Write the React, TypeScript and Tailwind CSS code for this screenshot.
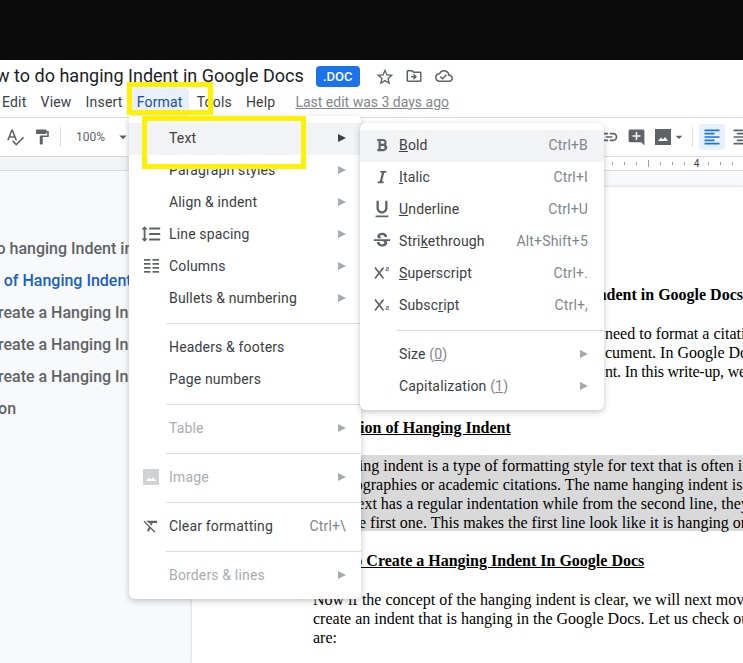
import type { ReactNode } from 'react'
import {
  MdFormatUnderlined,
  MdStrikethroughS,
  MdFormatLineSpacing,
  MdFormatClear,
  MdFormatPaint,
  MdSpellcheck,
  MdStarBorder,
  MdOutlineDriveFileMove,
  MdOutlineCloudDone,
  MdAddComment,
  MdLink,
  MdFormatAlignLeft,
  MdFormatAlignCenter,
  MdArrowDropDown,
} from 'react-icons/md'
import { FaBold, FaItalic } from 'react-icons/fa'

function Arrow({ dark = false }: { dark?: boolean }) {
  return (
    <svg width="8" height="8" viewBox="0 0 8 8" className={dark ? 'text-[#3c4043]' : 'text-[#a6abb0]'}>
      <polygon points="0,0 8,4 0,8" fill="currentColor" />
    </svg>
  )
}

function ColumnsIcon() {
  return (
    <svg width="15" height="14" viewBox="0 0 15 14" fill="#5f6368">
      {[0, 4, 8, 12].map(y => (
        <g key={y}>
          <rect x="0" y={y} width="6.5" height="1.7" />
          <rect x="8.5" y={y} width="6.5" height="1.7" />
        </g>
      ))}
    </svg>
  )
}

function ImageIcon({ fill }: { fill: string }) {
  return (
    <svg width="16" height="16" viewBox="0 0 16 16">
      <rect width="16" height="16" fill={fill} />
      <path d="M3 12 L6 8.5 L8 10.5 L10 8 L13 12 Z" fill="#fff" />
    </svg>
  )
}

function ScriptIcon({ sub = false }: { sub?: boolean }) {
  const y = sub ? 8 : 1
  return (
    <svg width="16" height="14" viewBox="0 0 16 14" fill="none" stroke="#5f6368">
      <path d="M1 1.5 L9.5 12.5 M9.5 1.5 L1 12.5" strokeWidth="1.7" />
      <path
        d={`M12 ${y + 0.5} H14.5 V${y + 2} H12 V${y + 3.6} H15`}
        strokeWidth="0.8"
      />
    </svg>
  )
}

function MainItem({
  label,
  icon,
  arrow,
  hint,
  disabled,
  active,
}: {
  label: string
  icon?: ReactNode
  arrow?: boolean
  hint?: string
  disabled?: boolean
  active?: boolean
}) {
  return (
    <div className={`flex h-8 items-center pb-[2px] pr-[15px] ${active ? 'bg-[#f1f3f4]' : ''}`}>
      <div className="flex w-10 shrink-0 items-center justify-center pl-[4px]">{icon}</div>
      <span className={disabled ? 'text-[#a9adb1]' : 'text-[#3c4043]'}>{label}</span>
      <div className="ml-auto flex items-center">
        {hint && <span className="text-[#80868b]">{hint}</span>}
        {arrow && <Arrow dark={active} />}
      </div>
    </div>
  )
}

function SubItem({
  label,
  icon,
  hint,
  arrow,
  active,
}: {
  label: ReactNode
  icon?: ReactNode
  hint?: string
  arrow?: boolean
  active?: boolean
}) {
  return (
    <div className={`flex h-8 items-center pb-[2px] pr-[16px] ${active ? 'bg-[#f1f3f4]' : ''}`}>
      <div className="flex w-[39px] shrink-0 items-center justify-center pl-[4px]">{icon}</div>
      <span className="text-[#3c4043]">{label}</span>
      <div className="ml-auto flex items-center">
        {hint && <span className="text-[#80868b]">{hint}</span>}
        {arrow && <Arrow />}
      </div>
    </div>
  )
}

function Sep({ left }: { left: string }) {
  return <div className={`my-2 h-px bg-[#dadce0] ${left}`} />
}

const outline = [
  { text: 'How to do hanging Indent in Google Docs', offset: '-ml-[67px]' },
  { text: 'Definition of Hanging Indent', offset: '-ml-[69px]', blue: true },
  { text: 'How to Create a Hanging Indent', offset: '-ml-[67px]' },
  { text: 'How to Create a Hanging Indent', offset: '-ml-[67px]' },
  { text: 'How to Create a Hanging Indent', offset: '-ml-[67px]' },
  { text: 'Conclusion', offset: '-ml-[64px]' },
]

const iconCls = 'shrink-0 text-[#5f6368]'

export default function App() {
  return (
    <div className="relative h-[663px] w-[743px] overflow-hidden bg-white font-['Roboto',sans-serif] text-[14px]">
      <div className="h-[60px] bg-[#0b0b0b]" />

      {/* title */}
      <div className="flex h-[28px] items-start pt-[4px]">
        <span className="-ml-[27px] whitespace-nowrap text-[18px] leading-[24px] text-[#202124]">
          How to do hanging Indent in Google Docs
        </span>
        <span className="ml-[12px] mt-[2px] flex h-[21px] w-[44px] items-center justify-center rounded-[4px] bg-[#1a73e8] text-[13px] font-medium text-white">
          .DOC
        </span>
        <MdStarBorder size={20} className={`ml-[15px] mt-[3px] ${iconCls}`} />
        <MdOutlineDriveFileMove size={18} className={`ml-[10px] mt-[3px] ${iconCls}`} />
        <MdOutlineCloudDone size={18} className={`ml-[12px] mt-[3px] ${iconCls}`} />
      </div>

      {/* menu bar */}
      <div className="flex h-[30px] items-start border-b border-[#dadce0] tracking-[0.2px] text-[#3c4043]">
        <span className="ml-[2px] flex h-[28px] items-center">Edit</span>
        <span className="ml-[14px] flex h-[28px] items-center">View</span>
        <span className="ml-[14px] flex h-[28px] items-center">Insert</span>
        <span className="ml-[8px] flex h-[28px] items-center rounded-t-[4px] bg-[#e8f0fe] px-[6px] text-[#174ea6]">
          Format
        </span>
        <span className="ml-[8px] flex h-[28px] items-center">Tools</span>
        <span className="ml-[14px] flex h-[28px] items-center">Help</span>
        <span className="ml-[20px] flex h-[28px] items-center tracking-normal text-[#80868b] underline">
          Last edit was 3 days ago
        </span>
      </div>

      {/* toolbar */}
      <div className="flex h-[39px] items-center border-b border-[#dadce0]">
        <MdSpellcheck size={20} className={`ml-[5px] ${iconCls}`} />
        <MdFormatPaint size={18} className={`ml-[8px] ${iconCls}`} />
        <div className="ml-[9px] h-[20px] w-px shrink-0 bg-[#dadce0]" />
        <span className="ml-[15px] w-[28px] shrink-0 text-[12px] text-[#5f6368]">100%</span>
        <MdArrowDropDown size={18} className={`ml-[10px] ${iconCls}`} />
        <MdLink size={20} className={`ml-[467px] ${iconCls}`} />
        <MdAddComment size={19} className={`ml-[8px] ${iconCls}`} />
        <div className="ml-[9px] shrink-0">
          <ImageIcon fill="#5f6368" />
        </div>
        <MdArrowDropDown size={16} className={iconCls} />
        <div className="ml-[5px] h-[20px] w-px shrink-0 bg-[#dadce0]" />
        <div className="ml-[6px] flex h-[26px] w-[26px] shrink-0 items-center justify-center rounded-[3px] bg-[#e8f0fe]">
          <MdFormatAlignLeft size={20} className="text-[#1a73e8]" />
        </div>
        <MdFormatAlignCenter size={20} className={`ml-[6px] ${iconCls}`} />
      </div>

      {/* ruler */}
      <div className="flex h-[14px] border-b border-[#dadce0]">
        <div className="w-[192px] shrink-0 bg-[#f1f3f4]" />
        <div className="flex flex-1 items-center bg-white pl-[420px]">
          <div className="flex shrink-0 items-center gap-[11px]">
            {[0, 1, 2, 3, 4, 5, 6, 7, 8, 9, 10, 11].map(i =>
              i === 7 ? (
                <span key={i} className="-mx-[3px] w-[7px] text-center text-[10px] leading-[12px] text-[#3c4043]">
                  4
                </span>
              ) : (
                <div key={i} className={`w-px bg-[#9aa0a6] ${i === 3 ? 'h-[7px]' : 'h-[3px]'}`} />
              ),
            )}
          </div>
        </div>
      </div>

      {/* body */}
      <div className="flex h-[492px] bg-[#f8f9fa]">
        <div className="w-[192px] shrink-0 overflow-hidden pt-[62px]">
          {outline.map((o, i) => (
            <div
              key={i}
              className={`h-8 whitespace-nowrap text-[16px] font-medium leading-[32px] ${o.offset} ${
                o.blue ? 'text-[#1a5fc4]' : 'text-[#5f6368]'
              }`}
            >
              {o.text}
            </div>
          ))}
        </div>

        <div className="mt-[16px] flex-1 overflow-hidden bg-white pl-[121px] pt-[98px] font-['Liberation_Serif',serif] text-[16px] leading-[19px] text-black shadow-[0_0_3px_rgba(0,0,0,0.2)]">
          <div className="-ml-[100px] whitespace-nowrap text-right font-bold">How to do hanging Indent in Google Docs</div>
          <div className="mt-[20px] whitespace-nowrap pl-[292px]">
            <div>need to format a citation</div>
            <div>cument. In Google Docs</div>
            <div className="tracking-[-0.2px]">nt. In this write-up, we</div>
          </div>
          <div className="mt-[37px] font-bold underline">Definition of Hanging Indent</div>
          <div className="mt-[18px] h-[76px] whitespace-nowrap bg-[#d9d9d9] pt-px">
            <div>A hanging indent is a type of formatting style for text that is often in</div>
            <div className="-ml-[4px]">in bibliographies or academic citations. The name hanging indent is so</div>
            <div className="-ml-px">of the text has a regular indentation while from the second line, they</div>
            <div className="ml-[2px]">than the first one. This makes the first line look like it is hanging on</div>
          </div>
          <div className="mt-[20px] font-bold underline">How to Create a Hanging Indent In Google Docs</div>
          <div className="mt-[20px] whitespace-nowrap">
            <div>Now if the concept of the hanging indent is clear, we will next move</div>
            <div>create an indent that is hanging in the Google Docs. Let us check out</div>
            <div>are:</div>
          </div>
        </div>
      </div>

      {/* format menu */}
      <div className="absolute left-[129px] top-[116px] w-[232px] rounded-b-[6px] rounded-t-[4px] bg-white py-[7px] tracking-[0.16px] shadow-[0_2px_6px_rgba(60,64,67,0.3)]">
        <MainItem label="Text" arrow active />
        <MainItem label="Paragraph styles" arrow />
        <MainItem label="Align & indent" arrow />
        <MainItem label="Line spacing" arrow icon={<MdFormatLineSpacing size={22} className={iconCls} />} />
        <MainItem label="Columns" arrow icon={<ColumnsIcon />} />
        <MainItem label="Bullets & numbering" arrow />
        <Sep left="ml-[37px]" />
        <MainItem label="Headers & footers" />
        <MainItem label="Page numbers" />
        <Sep left="ml-[37px]" />
        <MainItem label="Table" arrow disabled />
        <Sep left="ml-[37px]" />
        <MainItem label="Image" arrow disabled icon={<ImageIcon fill="#d0d2d4" />} />
        <Sep left="ml-[37px]" />
        <MainItem label="Clear formatting" hint="Ctrl+\" icon={<MdFormatClear size={18} className={iconCls} />} />
        <Sep left="ml-[37px]" />
        <MainItem label="Borders & lines" arrow disabled />
      </div>

      {/* text submenu */}
      <div className="absolute left-[360px] top-[123px] w-[244px] rounded-[6px] bg-white py-[7px] tracking-[0.16px] shadow-[0_2px_6px_rgba(60,64,67,0.3)]">
        <SubItem active label={<><u>B</u>old</>} hint="Ctrl+B" icon={<FaBold size={14} className={iconCls} />} />
        <SubItem label={<><u>I</u>talic</>} hint="Ctrl+I" icon={<FaItalic size={14} className={iconCls} />} />
        <SubItem label={<><u>U</u>nderline</>} hint="Ctrl+U" icon={<MdFormatUnderlined size={22} className={iconCls} />} />
        <SubItem label={<>Stri<u>k</u>ethrough</>} hint="Alt+Shift+5" icon={<MdStrikethroughS size={22} className={iconCls} />} />
        <SubItem label={<><u>S</u>uperscript</>} hint="Ctrl+." icon={<ScriptIcon />} />
        <SubItem label={<>Subsc<u>r</u>ipt</>} hint="Ctrl+," icon={<ScriptIcon sub />} />
        <Sep left="ml-[37px]" />
        <SubItem label={<>Size <span className="text-[#80868b]">(<u>0</u>)</span></>} arrow />
        <SubItem label={<>Capitalization <span className="text-[#80868b]">(<u>1</u>)</span></>} arrow />
      </div>

      {/* yellow annotation boxes */}
      <div className="absolute left-[127px] top-[82px] h-[33px] w-[86px] border-[5px] border-[#fff200]" />
      <div className="absolute left-[142px] top-[116px] h-[53px] w-[164px] border-[5px] border-[#fff200]" />
    </div>
  )
}
